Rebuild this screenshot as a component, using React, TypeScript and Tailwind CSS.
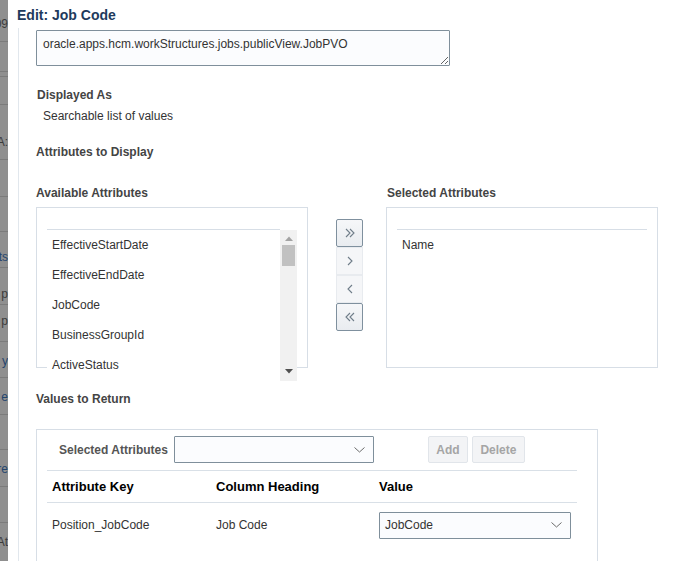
import React from "react";

const stripRows: { h: number; t?: string; c?: string; top?: number }[] = [
  { h: 42, t: "09", c: "#3c3c3c", top: 17 },
  { h: 30 },
  { h: 5 },
  { h: 28 },
  { h: 55, t: "A:", c: "#3c3c3c", top: 30 },
  { h: 37 },
  { h: 35 },
  { h: 36, t: "ts", c: "#24456e", top: 18 },
  { h: 37, t: "p", c: "#3c3c3c", top: 19 },
  { h: 37, t: "p", c: "#3c3c3c", top: 9 },
  { h: 36, t: "y", c: "#24456e", top: 12 },
  { h: 37, t: "e", c: "#24456e", top: 12 },
  { h: 35 },
  { h: 37, t: "re", c: "#24456e", top: 12 },
  { h: 36 },
  { h: 60, t: "At", c: "#3c3c3c", top: 12 },
];

function Chevron({ dir, double }: { dir: "r" | "l"; double?: boolean }) {
  const pts = (x: number) =>
    dir === "r" ? `${x},1 ${x + 4},5 ${x},9` : `${x + 4},1 ${x},5 ${x + 4},9`;
  return (
    <svg width="12" height="10" viewBox="0 0 12 10" fill="none">
      {double ? (
        <>
          <polyline points={pts(2)} stroke="#6f7d89" strokeWidth="1.1" />
          <polyline points={pts(6)} stroke="#6f7d89" strokeWidth="1.1" />
        </>
      ) : (
        <polyline points={pts(4)} stroke="#6f7d89" strokeWidth="1.1" />
      )}
    </svg>
  );
}

function DownChevron() {
  return (
    <svg width="11" height="6" viewBox="0 0 11 6" fill="none">
      <polyline points="0.5,0.5 5.5,5 10.5,0.5" stroke="#6b6b6b" strokeWidth="1" />
    </svg>
  );
}

export default function App() {
  const font = { fontFamily: '"Liberation Sans", Arial, sans-serif' };
  const items = ["EffectiveStartDate", "EffectiveEndDate", "JobCode", "BusinessGroupId", "ActiveStatus"];
  return (
    <div className="w-[677px] h-[561px] overflow-hidden flex bg-white text-[#333333]" style={font}>
      {/* dimmed background page strip */}
      <div className="w-[8px] shrink-0 bg-[#8f8f8f] flex flex-col overflow-hidden">
        {stripRows.map((r, i) => (
          <div
            key={i}
            className="shrink-0 border-b border-[#7b7b7b] flex justify-end overflow-hidden"
            style={{ height: r.h }}
          >
            {r.t && (
              <span
                className="text-[12px] leading-[14px] whitespace-nowrap"
                style={{ color: r.c, marginTop: r.top }}
              >
                {r.t}
              </span>
            )}
          </div>
        ))}
      </div>

      {/* dialog */}
      <div className="flex-1 flex flex-col bg-white">
        <div className="h-[28px] pl-[9px] pt-[6px]">
          <h1 className="text-[14px] leading-[18px] font-bold text-[#1e3a5c]">Edit: Job Code</h1>
        </div>

        <div className="ml-[10px] flex-1 border-l border-[#e1e7ed] pl-[17px] flex flex-col">
          <textarea
            readOnly
            defaultValue="oracle.apps.hcm.workStructures.jobs.publicView.JobPVO"
            className="mt-[2px] w-[414px] h-[36px] border border-[#7f8f9b] rounded-[1px] bg-[#fbfcfe] pl-[6px] pt-[6px] text-[12px] leading-[14px] text-[#333333] outline-none"
            style={font}
          />

          <div className="mt-[21px] pl-[1px] text-[12px] leading-[16px] font-bold text-[#444444]">Displayed As</div>
          <div className="mt-[5px] pl-[7px] text-[12px] leading-[16px] text-[#333333]">Searchable list of values</div>

          <div className="mt-[20px] text-[12px] leading-[16px] font-bold text-[#444444]">Attributes to Display</div>

          <div className="mt-[25px] flex text-[12px] leading-[16px] font-bold text-[#444444]">
            <span className="w-[351px]">Available Attributes</span>
            <span>Selected Attributes</span>
          </div>

          <div className="mt-[6px] flex items-start">
            {/* available list */}
            <div className="w-[272px] h-[161px] border border-[#d7dee6] shrink-0">
              <div className="ml-[10px] mt-[21px] w-[250px] flex">
                <div className="w-[233px] h-[151px] bg-white border-t border-[#d7dee6] overflow-hidden">
                  {items.map((it) => (
                    <div key={it} className="h-[30px] pl-[5px] pt-[1px] text-[12px] leading-[28px] text-[#333333]">
                      {it}
                    </div>
                  ))}
                </div>
                <div className="w-[17px] h-[151px] mt-[1px] bg-[#f1f1f1] flex flex-col items-center">
                  <svg width="8" height="5" viewBox="0 0 8 5" className="mt-[6px]">
                    <polygon points="0,5 4,0.5 8,5" fill="#a3a3a3" />
                  </svg>
                  <div className="mt-[4px] w-[13px] h-[21px] bg-[#c1c1c1]" />
                  <div className="flex-1" />
                  <svg width="8" height="5" viewBox="0 0 8 5" className="mb-[7px]">
                    <polygon points="0,0 8,0 4,4.5" fill="#505050" />
                  </svg>
                </div>
              </div>
            </div>

            {/* shuttle */}
            <div className="ml-[28px] mt-[12px] w-[27px] flex flex-col shrink-0">
              <button className="h-[28px] flex items-center justify-center border border-[#7f909e] rounded-[2px] bg-gradient-to-b from-[#f6f7f9] to-[#e9ecf0]">
                <Chevron dir="r" double />
              </button>
              <button className="h-[28px] flex items-center justify-center border border-[#e8ebef] bg-[#f5f6f8]">
                <Chevron dir="r" />
              </button>
              <button className="h-[28px] flex items-center justify-center border border-[#e8ebef] bg-[#f5f6f8]">
                <Chevron dir="l" />
              </button>
              <button className="h-[28px] flex items-center justify-center border border-[#7f909e] rounded-[2px] bg-gradient-to-b from-[#f6f7f9] to-[#e9ecf0]">
                <Chevron dir="l" double />
              </button>
            </div>

            {/* selected list */}
            <div className="ml-[23px] w-[272px] h-[161px] border border-[#d7dee6] shrink-0">
              <div className="ml-[10px] mt-[21px] w-[250px] border-t border-[#d7dee6]">
                <div className="h-[30px] pl-[5px] pt-[1px] text-[12px] leading-[28px] text-[#333333]">Name</div>
              </div>
            </div>
          </div>

          <div className="mt-[23px] text-[12px] leading-[16px] font-bold text-[#444444]">Values to Return</div>

          <div className="mt-[22px] w-[562px] flex-1 border border-[#d7dee6] border-b-0">
            <div className="h-[40px] pl-[22px] pt-[6px] flex items-start">
              <span className="h-[27px] flex items-center text-[12px] font-bold text-[#555555]">Selected Attributes</span>
              <div className="ml-[6px] w-[200px] h-[27px] border border-[#7f8f9b] rounded-[1px] bg-[#fbfcfe] flex items-center justify-end pr-[8px]">
                <DownChevron />
              </div>
              <button className="ml-[54px] w-[40px] h-[27px] border border-[#e1e5ea] rounded-[2px] bg-[#f3f4f6] text-[12px] font-bold text-[#a5a5a5]">
                Add
              </button>
              <button className="ml-[4px] w-[53px] h-[27px] border border-[#e1e5ea] rounded-[2px] bg-[#f3f4f6] text-[12px] font-bold text-[#a5a5a5]">
                Delete
              </button>
            </div>

            <div className="ml-[10px] w-[530px] border-t border-[#d9e0e7]">
              <div className="h-[32px] flex items-center border-b border-[#d9e0e7] text-[13px] font-bold text-black">
                <div className="w-[163px] pl-[5px]">Attribute Key</div>
                <div className="w-[163px] pl-[6px]">Column Heading</div>
                <div className="flex-1 pl-[6px]">Value</div>
              </div>
              <div className="h-[44px] flex items-center text-[12px] text-[#333333]">
                <div className="w-[163px] pl-[5px]">Position_JobCode</div>
                <div className="w-[163px] pl-[6px]">Job Code</div>
                <div className="flex-1 pl-[6px]">
                  <div className="w-[192px] h-[27px] border border-[#7f8f9b] rounded-[1px] bg-[#fbfcfe] flex items-center justify-between pl-[5px] pr-[8px]">
                    <span>JobCode</span>
                    <DownChevron />
                  </div>
                </div>
              </div>
            </div>
          </div>
        </div>
      </div>
    </div>
  );
}
